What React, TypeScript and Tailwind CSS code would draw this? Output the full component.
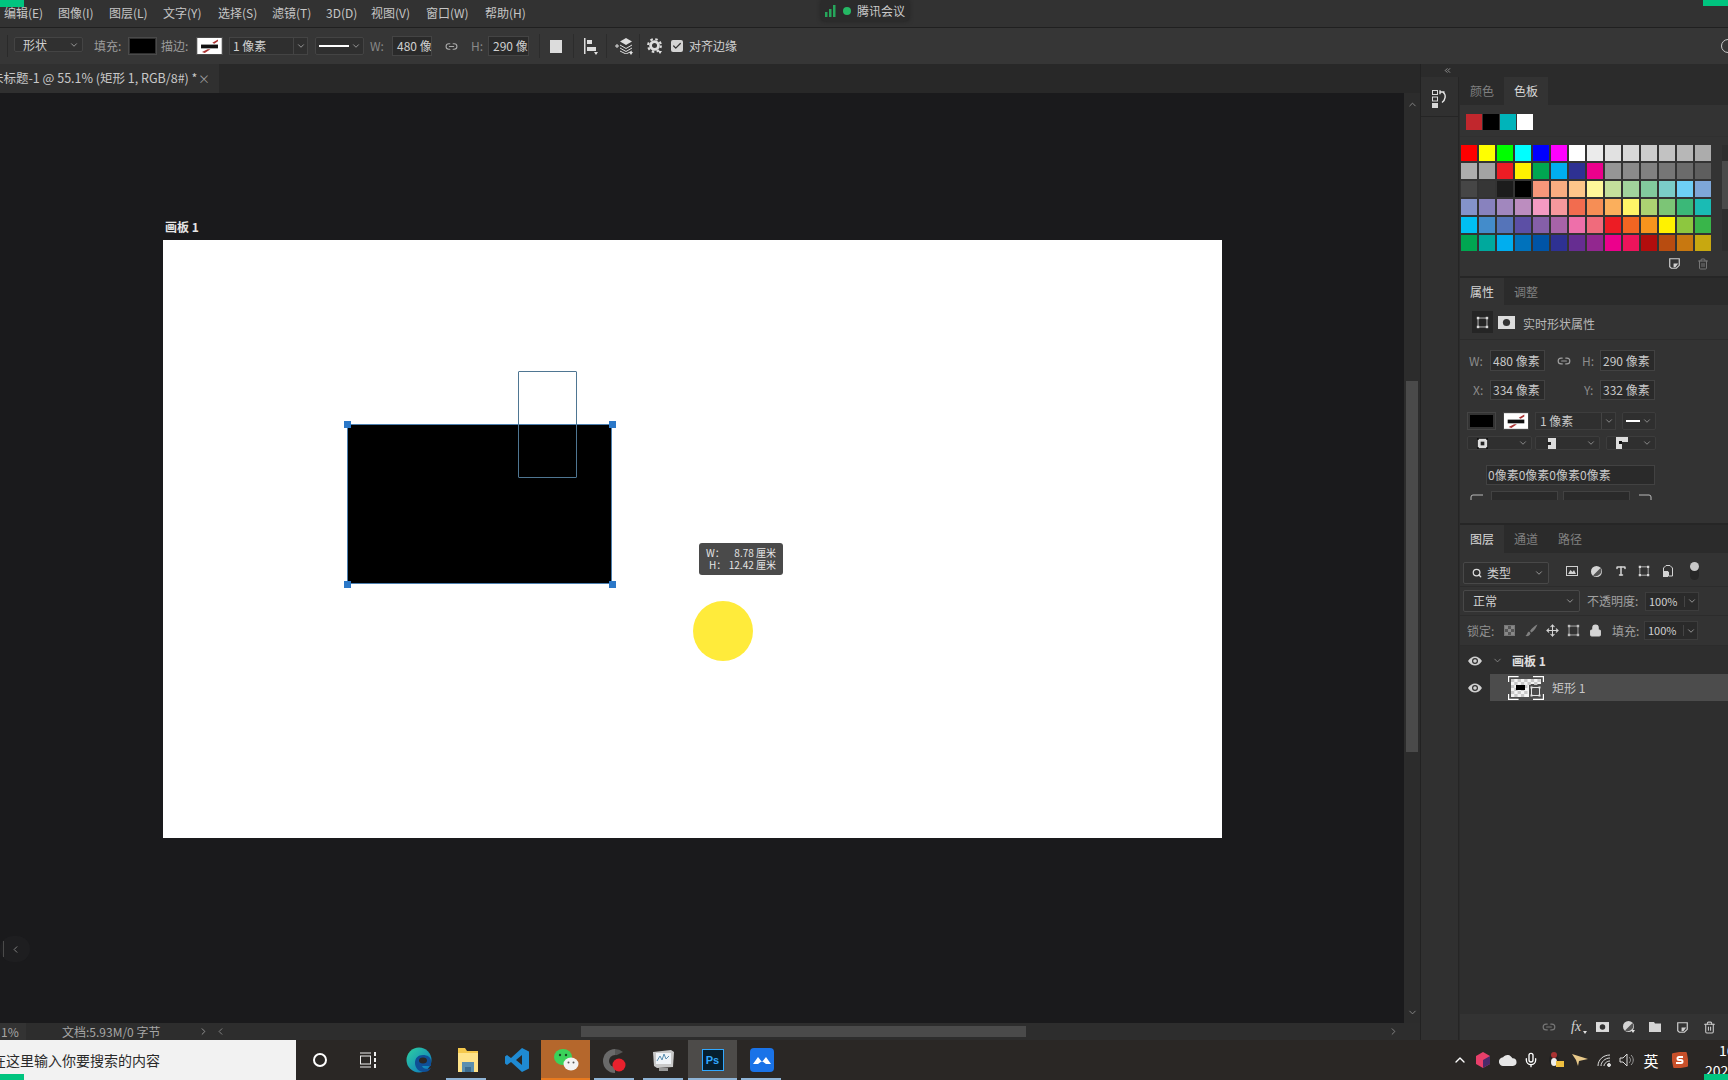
import React from "react";
import { ChevronDown, ChevronUp, ChevronLeft, ChevronRight, ChevronsLeft, Link2, Trash2, Check, Search, Lock, Move, Type, Mic } from "lucide-react";

const swatches = [
  ["#ff0000","#ffff00","#00ff00","#00ffff","#0000ff","#ff00ff","#ffffff","#ebebeb","#e1e1e1","#d7d7d7","#cccccc","#c2c2c2","#b7b7b7","#acacac"],
  ["#adadad","#a3a3a3","#ed1c24","#fff200","#00a651","#00aeef","#2e3192","#ec008c","#959595","#8b8b8b","#818181","#767676","#6b6b6b","#5e5e5e"],
  ["#464646","#363636","#1c1c1c","#000000","#f7977a","#f9ad81","#fdc68a","#fff79a","#c4df9b","#a2d39c","#82ca9d","#7bcdc8","#6ecff6","#7ea7d8"],
  ["#8493ca","#8882be","#a187be","#bc8dbf","#f49ac2","#f6989d","#f26c4f","#f68e55","#fbaf5c","#fff467","#acd372","#7cc576","#3bb878","#1abbb4"],
  ["#00bff3","#438ccb","#5574b9","#5c4fa5","#855fa8","#a763a8","#ee6faa","#f06b7c","#ed1c24","#f26522","#f7941d","#fff200","#8dc73f","#39b54a"],
  ["#00a651","#00a99d","#00aeef","#0072bc","#0054a6","#2e3192","#662d91","#92278f","#ec008c","#ed145b","#b20d0d","#b84c10","#c87810","#c8a810"],
];

const menus: [string, string][] = [
  ["编辑(E)", "w-[39px] ml-[4px]"], ["图像(I)", "w-[37px] ml-[15px]"], ["图层(L)", "w-[40px] ml-[14px]"], ["文字(Y)", "w-[40px] ml-[14px]"],
  ["选择(S)", "w-[39px] ml-[15px]"], ["滤镜(T)", "w-[39px] ml-[15px]"], ["3D(D)", "w-[30px] ml-[15px]"], ["视图(V)", "w-[41px] ml-[15px]"],
  ["窗口(W)", "w-[45px] ml-[14px]"], ["帮助(H)", "w-[42px] ml-[14px]"],
];

function Caret() {
  return <span className="absolute right-0 bottom-0 w-0 h-0 border-l-[2px] border-r-[2px] border-t-[3px] border-l-transparent border-r-transparent border-t-[#e0e0e0]" />;
}

function StrokeIcon({ className }: { className: string }) {
  return (
    <svg viewBox="0 0 26 17" className={className}>
      <rect width="26" height="17" fill="#fff" />
      <rect x="4" y="7" width="18" height="4" fill="#111" />
      <path d="M16 5l6-3.500v2L18 6zM5 15l6-3h3l-6 4z" fill="#a33" />
    </svg>
  );
}

function Tab({ label, active }: { label: string; active?: boolean }) {
  return (
    <div className={`w-[44px] h-full flex items-center justify-center text-[12px] ${active ? "bg-[#333333] text-[#d8d8d8]" : "bg-[#2b2b2b] text-[#808080]"}`}>
      {label}
    </div>
  );
}

function SmallDrop({ children, className }: { children: React.ReactNode; className: string }) {
  return (
    <div className={`flex items-center justify-between bg-[#2f2f2f] border border-[#3d3d3d] rounded-[2px] ${className}`}>
      {children}
      <ChevronDown size={10} className="text-[#9a9a9a] mr-[3px] shrink-0" />
    </div>
  );
}

function PropInput({ text }: { text: string }) {
  return (
    <div className="w-[55px] h-full bg-[#2a2a2a] border border-[#424242] flex items-center pl-[2px] text-[12px] text-[#c8c8c8] whitespace-nowrap overflow-hidden">{text}</div>
  );
}

function TransformIcon({ size = 16, color = "#d8d8d8" }: { size?: number; color?: string }) {
  return (
    <svg viewBox="0 0 16 16" width={size} height={size} fill="none">
      <rect x="2.500" y="2.500" width="11" height="11" stroke={color} />
      <g fill={color}>
        <rect x="1" y="1" width="3" height="3" /><rect x="12" y="1" width="3" height="3" />
        <rect x="1" y="12" width="3" height="3" /><rect x="12" y="12" width="3" height="3" />
      </g>
    </svg>
  );
}

function MaskIcon({ w = 17, h = 13 }: { w?: number; h?: number }) {
  return (
    <svg viewBox="0 0 17 13" width={w} height={h}>
      <rect width="17" height="13" fill="#dcdcdc" />
      <circle cx="8.500" cy="6.500" r="3.600" fill="#333" />
    </svg>
  );
}

function EyeIcon() {
  return (
    <svg viewBox="0 0 14 10" width="14" height="10">
      <path d="M0 5c2-3 4.400-4.500 7-4.500S12 2 14 5c-2 3-4.400 4.500-7 4.500S2 8 0 5z" fill="#d0d0d0" />
      <circle cx="7" cy="5" r="3" fill="#2e2e2e" />
      <circle cx="7" cy="5" r="1.800" fill="#d0d0d0" />
    </svg>
  );
}

function NewIcon() {
  return (
    <svg viewBox="0 0 12 12" width="11" height="11" fill="none">
      <path d="M.8.8h10.400v7.200l-3.200 3.200H2.500l-1.700-1.700z" stroke="#cfcfcf" strokeWidth="1.300" />
      <path d="M5 6h5l-3 4H5z" fill="#cfcfcf" />
    </svg>
  );
}

function HistoryIcon() {
  return (
    <svg viewBox="0 0 15 18" width="15" height="18" fill="none">
      <rect x="0.500" y="0.500" width="5" height="4" stroke="#d8d8d8" />
      <rect x="0.500" y="7" width="5" height="4" stroke="#d8d8d8" />
      <rect x="0" y="13" width="6" height="5" fill="#d8d8d8" />
      <path d="M8 2h4.500M8 .2v4M11 2c3.500 3 2.500 8-1 10.500" stroke="#e6e6e6" strokeWidth="1.400" />
    </svg>
  );
}

function GearIcon() {
  return (
    <svg viewBox="0 0 16 16" width="15" height="15" fill="none">
      <circle cx="8" cy="8" r="4.200" stroke="#dcdcdc" strokeWidth="3" />
      <circle cx="8" cy="8" r="6.800" stroke="#dcdcdc" strokeWidth="2.200" strokeDasharray="2.700 2.640" />
    </svg>
  );
}

function LayerThumb() {
  const cells: [number, number][] = [];
  for (let y = 0; y < 6; y++) for (let x = 0; x < 9; x++) if ((x + y) % 2 === 0) cells.push([x, y]);
  return (
    <svg viewBox="0 0 36 24" width="36" height="24" className="shrink-0">
      <rect x="3" y="3" width="18" height="18" fill="#f4f4f4" />
      <rect x="21" y="3" width="12" height="5" fill="#f4f4f4" />
      {cells.map(([x, y]) => (y < 2 || x < 5) && <rect key={`${x}-${y}`} x={3 + x * 3.300} y={3 + y * 3} width="3.300" height="3" fill="#c8c8c8" />)}
      <rect x="8" y="9" width="9" height="5" fill="#000" />
      <g fill="none" stroke="#fff" strokeWidth="1.200"><path d="M.6 6V.6h10M25 .6h10.400V6M.6 18v5.400h10M25 23.400h10.400V18" /></g>
      <rect x="23.500" y="11.500" width="8" height="8" fill="#4c4c4c" stroke="#e4e4e4" />
      <g fill="#e4e4e4"><rect x="22.500" y="10.500" width="2" height="2" /><rect x="30.500" y="10.500" width="2" height="2" /><rect x="22.500" y="18.500" width="2" height="2" /><rect x="30.500" y="18.500" width="2" height="2" /></g>
    </svg>
  );
}

function TaskCell({ children, active, under }: { children: React.ReactNode; active?: string; under?: string }) {
  return (
    <div className={`w-[49px] h-full relative flex items-center justify-center ${active ?? ""}`}>
      {children}
      {under && <span className={`absolute bottom-0 h-[2px] ${under}`} />}
    </div>
  );
}

export default function App() {
  return (
    <div className="w-[1728px] h-[1080px] flex flex-col overflow-hidden bg-[#333333] text-[12px] leading-none [font-family:'Noto_Sans_CJK_SC','Liberation_Sans',sans-serif]">
      {/* Menu bar */}
      <div className="h-[28px] shrink-0 bg-[#323232] border-b border-[#202020] flex items-center relative text-[#c6c6c6] text-[12px]">
        <span className="absolute left-0 top-0 w-[24px] h-[7px] bg-[#00c47f]" />
        <span className="absolute right-0 top-0 w-[25px] h-[6px] bg-[#00c47f]" />
        {menus.map(([label, cls]) => (
          <span key={label} className={`${cls} whitespace-nowrap pb-[1px]`}>{label}</span>
        ))}
        <div className="ml-[294px] self-start w-[88px] h-[21px] bg-[#2b2b2b] flex items-center rounded-b-[3px] shadow-[0_0_4px_#222]">
          <svg viewBox="0 0 11 12" width="11" height="12" className="ml-[4px]">
            <rect x="0" y="7" width="2.500" height="5" fill="#26a65b" /><rect x="4" y="4" width="2.500" height="8" fill="#26a65b" /><rect x="8" y="0" width="2.500" height="12" fill="#26a65b" />
          </svg>
          <span className="w-[8px] h-[8px] rounded-full bg-[#25b864] ml-[7px]" />
          <span className="ml-[6px] text-[12px] text-[#c9c9c9] whitespace-nowrap">腾讯会议</span>
        </div>
      </div>

      {/* Options bar */}
      <div className="h-[36px] shrink-0 bg-[#363636] flex items-center text-[#9c9c9c] text-[12px] relative overflow-hidden">
        <span className="ml-[7px] w-px h-[22px] bg-[#2a2a2a]" />
        <div className="ml-[6px] w-[69px] h-[15px] border border-[#444] rounded-[2px] flex items-center justify-between mb-[3px] bg-[#303030]">
          <span className="ml-[8px] text-[#d0d0d0]">形状</span>
          <ChevronDown size={10} className="mr-[3px] text-[#aaa]" />
        </div>
        <span className="ml-[11px] w-[30px] whitespace-nowrap">填充:</span>
        <div className="ml-[4px] w-[29px] h-[18px] border border-[#4a4a4a] p-[1px] bg-[#2f2f2f]"><div className="w-full h-full bg-black" /></div>
        <span className="ml-[4px] w-[31px] whitespace-nowrap">描边:</span>
        <div className="ml-[4px] w-[27px] h-[18px] border border-[#4a4a4a]"><StrokeIcon className="w-full h-full block" /></div>
        <div className="ml-[6px] w-[79px] h-[18px] bg-[#2f2f2f] border border-[#444] flex items-center justify-between text-[#d0d0d0]">
          <span className="ml-[3px]">1 像素</span>
          <span className="w-[14px] h-full border-l border-[#444] flex items-center justify-center"><ChevronDown size={10} className="text-[#aaa]" /></span>
        </div>
        <div className="ml-[7px] w-[49px] h-[18px] bg-[#2f2f2f] border border-[#444] rounded-[2px] flex items-center justify-between">
          <span className="ml-[3px] w-[30px] h-[2px] bg-white" />
          <ChevronDown size={10} className="mr-[2px] text-[#aaa]" />
        </div>
        <span className="ml-[6px] w-[16px] text-[#888]">W:</span>
        <div className="ml-[6px] w-[40px] h-[20px] bg-[#2a2a2a] border border-[#444] pl-[4px] text-[#cfcfcf] overflow-hidden whitespace-nowrap flex items-center">480 像素</div>
        <Link2 size={13} className="ml-[13px] text-[#aaa]" />
        <span className="ml-[13px] w-[13px] text-[#888]">H:</span>
        <div className="ml-[4px] w-[41px] h-[20px] bg-[#2a2a2a] border border-[#444] pl-[4px] text-[#cfcfcf] overflow-hidden whitespace-nowrap flex items-center">290 像素</div>
        <span className="ml-[10px] w-px h-[24px] bg-[#2c2c2c]" />
        <span className="ml-[10px] w-[12px] h-[13px] bg-[#dcdcdc] relative"><Caret /></span>
        <span className="ml-[11px] w-px h-[24px] bg-[#2c2c2c]" />
        <span className="ml-[10px] w-[14px] h-[17px] relative">
          <svg viewBox="0 0 14 16" width="14" height="16"><rect x="0" y="0" width="1.500" height="16" fill="#ddd" /><rect x="3" y="2" width="5" height="4" fill="#ddd" /><rect x="3" y="9" width="9" height="4" fill="#ddd" /></svg>
          <Caret />
        </span>
        <span className="ml-[8px] w-px h-[24px] bg-[#2c2c2c]" />
        <span className="ml-[7px] w-[19px] h-[17px] relative">
          <svg viewBox="0 0 19 16" width="19" height="16" fill="none"><path d="M1 8h4M3 6v4" stroke="#ddd" /><path d="M12 0l6 3.500-6 3.500-6-3.500z" fill="#ddd" /><path d="M6 7l6 3.500L18 7M6 10l6 3.500L18 10M6 13l6 3 6-3" stroke="#ddd" /></svg>
          <Caret />
        </span>
        <span className="ml-[6px] w-px h-[24px] bg-[#2c2c2c]" />
        <span className="ml-[7px] w-[15px] h-[16px] relative"><GearIcon /><Caret /></span>
        <span className="ml-[9px] w-[12px] h-[12px] rounded-[2px] bg-[#d4d4d4] flex items-center justify-center"><Check size={10} strokeWidth={3} className="text-[#333]" /></span>
        <span className="ml-[6px] text-[#cfcfcf] whitespace-nowrap">对齐边缘</span>
        <span className="absolute right-[-7px] top-[11px] w-[14px] h-[14px] rounded-full border border-[#c8c8c8]" />
      </div>

      {/* Workspace */}
      <div className="flex-1 min-h-0 flex">
        {/* Document column */}
        <div className="w-[1420px] shrink-0 flex flex-col bg-[#2a2a2a]">
          <div className="h-[29px] shrink-0 flex bg-[#282828]">
            <div className="w-[219px] bg-[#303030] flex items-center text-[#c8c8c8] overflow-hidden whitespace-nowrap">
              <span className="-ml-[9px] w-[202px] shrink-0 text-[12.500px]">未标题-1 @ 55.1% (矩形 1, RGB/8#) *</span>
              <span className="ml-[5px] text-[#9a9a9a]">×</span>
            </div>
          </div>
          <div className="flex-1 min-h-0 flex">
            <div className="flex-1 bg-[#1a1a1c] relative pl-[163px] pt-[121px]">
              <div className="h-[26px] text-[12px] font-bold text-[#e6e6e6] pl-[2px] flex items-center whitespace-nowrap">画板 1</div>
              <div className="w-[1059px] h-[598px] bg-white relative">
                <div className="absolute left-[184px] top-[184px] w-[265px] h-[160px] bg-black border-[1.500px] border-[#4d7fae]" />
                {[[181,181],[446,181],[181,341],[446,341]].map(([l,t]) => (
                  <span key={`${l}-${t}`} style={{ left: l, top: t }} className="absolute w-[7px] h-[7px] bg-[#2b78c8]" />
                ))}
                <div className="absolute left-[355px] top-[131px] w-[59px] h-[107px] border border-[#4f7692] rounded-[1px]" />
                <div className="absolute left-[536px] top-[303px] w-[84px] h-[32px] bg-[#4a4a4a] rounded-[3px] text-[10px] text-[#e4e4e4] flex flex-col justify-center items-end pr-[7px] leading-[12px] whitespace-nowrap">
                  <div className="flex w-full pl-[7px] justify-between"><span>W：</span><span>8.78 厘米</span></div>
                  <div className="flex w-full pl-[10px] justify-between"><span>H：</span><span>12.42 厘米</span></div>
                </div>
                <div className="absolute left-[530px] top-[361px] w-[60px] h-[60px] rounded-full bg-[#ffeb3b]" />
              </div>
              <div className="absolute left-0 top-[843px] w-[30px] h-[26px] flex items-center rounded-full bg-[#1e1e20]">
                <span className="w-px h-[16px] bg-[#4a4a4a] ml-[3px]" />
                <ChevronLeft size={11} className="ml-[6px] text-[#8a8a8a]" />
              </div>
            </div>
            {/* vertical scrollbar */}
            <div className="w-[16px] bg-[#2c2c2c] flex flex-col items-center">
              <ChevronUp size={11} className="text-[#8a8a8a] mt-[6px] shrink-0" />
              <div className="mt-[271px] w-[12px] h-[371px] bg-[#4a4a4a] shrink-0" />
              <div className="flex-1" />
              <ChevronDown size={11} className="text-[#8a8a8a] mb-[5px] shrink-0" />
            </div>
          </div>
          {/* status bar */}
          <div className="h-[17px] shrink-0 bg-[#2d2d2d] flex items-center text-[12px] text-[#a6a6a6]">
            <div className="w-[26px] h-full bg-[#333333] flex items-center pl-[1px]">1%</div>
            <div className="w-[172px] h-full pl-[36px] flex items-center whitespace-nowrap">文档:5.93M/0 字节</div>
            <ChevronRight size={11} className="text-[#999] shrink-0" />
            <ChevronLeft size={11} className="ml-[6px] text-[#888] shrink-0" />
            <div className="ml-[355px] w-[445px] h-[11px] bg-[#4a4a4a] shrink-0" />
            <div className="flex-1" />
            <ChevronRight size={11} className="mr-[21px] text-[#888] shrink-0" />
          </div>
        </div>

        {/* Right side */}
        <div className="flex-1 min-w-0 flex flex-col bg-[#2b2b2b] border-l border-[#222]">
          <div className="h-[13px] shrink-0 flex items-center pl-[22px]"><ChevronsLeft size={9} className="text-[#b0b0b0]" /></div>
          <div className="flex-1 min-h-0 flex">
            {/* icon strip */}
            <div className="w-[38px] shrink-0 bg-[#303030] border-r border-[#252525]">
              <div className="h-[40px] border-b border-[#252525] flex items-center justify-center pt-[4px]"><HistoryIcon /></div>
            </div>
            {/* Panels */}
            <div className="flex-1 min-w-0 flex flex-col ml-[1px] bg-[#262626]">
              {/* Swatches */}
              <div className="h-[199px] shrink-0 bg-[#333333] flex flex-col">
                <div className="h-[28px] flex bg-[#2b2b2b] shrink-0"><Tab label="颜色" /><Tab label="色板" active /></div>
                <div className="h-[32px] flex items-center pl-[6px] pt-[2px] gap-px border-b border-[#303030]">
                  {["#c1272d","#000000","#00b4ba","#ffffff"].map((c) => <span key={c} className="w-[16px] h-[16px]" style={{ background: c }} />)}
                </div>
                <div className="pt-[8px] pl-[1px] flex">
                  <div className="flex flex-col gap-[2px]">
                    {swatches.map((row, i) => (
                      <div key={i} className="flex gap-[2px]">
                        {row.map((c, j) => <span key={j} className="w-[16px] h-[16px]" style={{ background: c }} />)}
                      </div>
                    ))}
                  </div>
                  <div className="ml-[11px] w-[6px] h-[106px] bg-[#2e2e2e] flex flex-col"><div className="mt-[16px] h-[48px] bg-[#4a4a4a]" /></div>
                </div>
                <div className="flex-1 flex items-center justify-end pr-[19px] gap-[17px]">
                  <NewIcon /><Trash2 size={12} className="text-[#777]" />
                </div>
              </div>

              {/* Properties */}
              <div className="mt-[2px] h-[245px] shrink-0 bg-[#333333] flex flex-col overflow-hidden">
                <div className="h-[27px] flex bg-[#2b2b2b] shrink-0"><Tab label="属性" active /><Tab label="调整" /></div>
                <div className="h-[35px] shrink-0 flex items-center pl-[12px] border-b border-[#2c2c2c]">
                  <span className="w-[21px] h-[22px] bg-[#252525] flex items-center justify-center"><TransformIcon size={13} /></span>
                  <span className="ml-[5px] flex"><MaskIcon /></span>
                  <span className="ml-[8px] pt-[3px] text-[12px] text-[#b8b8b8]">实时形状属性</span>
                </div>
                <div className="mt-[10px] h-[21px] shrink-0 flex items-center pl-[9px] text-[#8c8c8c]">
                  <span className="w-[21px]">W:</span><PropInput text="480 像素" />
                  <span className="w-[37px] flex justify-center"><Link2 size={14} className="text-[#a0a0a0]" /></span>
                  <span className="w-[18px]">H:</span><PropInput text="290 像素" />
                </div>
                <div className="mt-[9px] h-[20px] shrink-0 flex items-center pl-[13px] text-[#8c8c8c]">
                  <span className="w-[17px]">X:</span><PropInput text="334 像素" />
                  <span className="w-[39px]" />
                  <span className="w-[16px]">Y:</span><PropInput text="332 像素" />
                </div>
                <div className="mt-[12px] h-[18px] shrink-0 flex items-center pl-[7px]">
                  <div className="w-[29px] h-full border border-[#444] p-[2px]"><div className="w-full h-full bg-black" /></div>
                  <div className="ml-[7px] w-[26px] h-full border border-[#444]"><StrokeIcon className="w-full h-full block" /></div>
                  <div className="ml-[6px] w-[81px] h-full bg-[#2f2f2f] border border-[#3d3d3d] flex items-center justify-between text-[#c8c8c8]">
                    <span className="ml-[4px]">1 像素</span>
                    <span className="w-[14px] h-full border-l border-[#444] flex items-center justify-center"><ChevronDown size={10} className="text-[#9a9a9a]" /></span>
                  </div>
                  <SmallDrop className="ml-[6px] w-[34px] h-full"><span className="ml-[3px] w-[14px] h-[2px] bg-white" /></SmallDrop>
                </div>
                <div className="mt-[6px] h-[14px] shrink-0 flex items-center pl-[7px]">
                  <SmallDrop className="w-[65px] h-full"><span className="ml-[9px] flex"><svg viewBox="0 0 12 12" width="11" height="11"><rect x="1" y="1" width="10" height="10" fill="#ddd" /><rect x="4" y="4" width="4" height="4" fill="#222" /><g fill="#111"><rect width="2" height="2" /><rect x="10" width="2" height="2" /><rect y="10" width="2" height="2" /><rect x="10" y="10" width="2" height="2" /></g></svg></span></SmallDrop>
                  <SmallDrop className="ml-[3px] w-[65px] h-full"><span className="ml-[11px] flex"><svg viewBox="0 0 9 11" width="9" height="11"><rect x="1" width="8" height="11" fill="#ddd" /><rect y="4" width="4" height="3" fill="#222" /></svg></span></SmallDrop>
                  <SmallDrop className="ml-[6px] w-[50px] h-full"><span className="ml-[9px] flex"><svg viewBox="0 0 12 12" width="12" height="12"><path d="M0 0h12v5H6v7H0z" fill="#ddd" /><rect x="3" y="4" width="3" height="3" fill="#111" /></svg></span></SmallDrop>
                </div>
                <div className="mt-[15px] ml-[26px] w-[169px] h-[20px] shrink-0 bg-[#2a2a2a] border border-[#424242] flex items-center pl-[1px] text-[#c8c8c8]">0像素0像素0像素0像素</div>
                <div className="mt-[6px] h-[9px] shrink-0 flex pl-[10px] overflow-hidden">
                  <svg viewBox="0 0 14 8" width="14" height="8" className="mt-[3px]" fill="none"><path d="M1 8V3q0-2 2-2h10" stroke="#bbb" /></svg>
                  <div className="ml-[7px] w-[67px] h-[14px] bg-[#2a2a2a] border border-[#424242]" />
                  <div className="ml-[5px] w-[67px] h-[14px] bg-[#2a2a2a] border border-[#424242]" />
                  <svg viewBox="0 0 14 8" width="14" height="8" className="ml-[8px] mt-[3px]" fill="none"><path d="M13 8V3q0-2-2-2H1" stroke="#bbb" /></svg>
                </div>
              </div>

              {/* Layers */}
              <div className="mt-[2px] flex-1 min-h-0 bg-[#333333] flex flex-col">
                <div className="h-[28px] flex bg-[#2b2b2b] shrink-0"><Tab label="图层" active /><Tab label="通道" /><Tab label="路径" /></div>
                <div className="h-[34px] shrink-0 flex items-start pt-[9px] pl-[3px] border-b border-[#2c2c2c]">
                  <div className="w-[86px] h-[22px] bg-[#2f2f2f] border border-[#484848] rounded-[2px] flex items-center justify-between text-[#d0d0d0]">
                    <span className="flex items-center ml-[8px] gap-[5px]"><Search size={10} strokeWidth={3} className="text-[#ddd]" />类型</span>
                    <ChevronDown size={10} className="mr-[4px] text-[#aaa]" />
                  </div>
                  <div className="flex items-center h-[18px]">
                    <span className="ml-[17px] flex"><svg viewBox="0 0 12 10" width="12" height="10" fill="none"><rect x=".5" y=".5" width="11" height="9" stroke="#d0d0d0" /><path d="M2 8l2.500-4 2 2 1.500-2 2 4z" fill="#d0d0d0" /></svg></span>
                    <span className="ml-[13px] flex"><svg viewBox="0 0 11 11" width="11" height="11"><circle cx="5.500" cy="5.500" r="5.500" fill="#d4d4d4" /><path d="M9.500 2L2 9.500A5.500 5.500 0 0 0 9.500 2z" fill="#555" /></svg></span>
                    <Type size={12} strokeWidth={3} className="ml-[13px] text-[#d4d4d4]" />
                    <span className="ml-[11px] flex"><TransformIcon size={12} /></span>
                    <span className="ml-[13px] flex"><svg viewBox="0 0 10 12" width="10" height="12"><path d="M3 .5h4l2.500 2.500v8h-4V7H.5V3z" fill="none" stroke="#d4d4d4" /><rect x="0" y="6" width="5" height="6" fill="#d4d4d4" /></svg></span>
                    <span className="ml-[17px] w-[9px] h-[18px] rounded-full bg-[#272727] relative"><span className="absolute top-0 left-0 w-[9px] h-[9px] rounded-full bg-[#c8c8c8]" /></span>
                  </div>
                </div>
                <div className="h-[29px] shrink-0 flex items-center pl-[3px] border-b border-[#2c2c2c]">
                  <div className="w-[117px] h-[22px] bg-[#2f2f2f] border border-[#484848] rounded-[2px] flex items-center justify-between text-[#d0d0d0]">
                    <span className="ml-[9px]">正常</span>
                    <ChevronDown size={10} className="mr-[4px] text-[#aaa]" />
                  </div>
                  <span className="ml-[7px] w-[58px] text-[#a0a0a0] whitespace-nowrap">不透明度:</span>
                  <div className="w-[54px] h-[19px] bg-[#2a2a2a] border border-[#3d3d3d] flex items-center text-[#cfcfcf] text-[11px]">
                    <span className="w-[39px] pl-[3px] border-r border-[#444]">100%</span>
                    <span className="flex-1 flex justify-center"><ChevronDown size={10} className="text-[#aaa]" /></span>
                  </div>
                </div>
                <div className="h-[30px] shrink-0 flex items-center pl-[7px] border-b border-[#2c2c2c]">
                  <span className="w-[30px] text-[#909090] whitespace-nowrap">锁定:</span>
                  <span className="ml-[7px] w-[11px] h-[11px] grid grid-cols-3 grid-rows-3 bg-[#555] border border-[#777]">
                    <i className="bg-[#888]" /><i /><i className="bg-[#888]" /><i /><i className="bg-[#888]" /><i /><i className="bg-[#888]" /><i /><i className="bg-[#888]" />
                  </span>
                  <svg viewBox="0 0 13 13" width="13" height="13" className="ml-[10px]"><path d="M12.500.5C10 1.500 6.500 4.500 5 7l1.500 1.500C9 7 11.500 3 12.500.5zM4 7.500c-2 .5-1.500 3-3.500 4.500 2.500.5 5-.5 5-3z" fill="#808080" /></svg>
                  <Move size={13} className="ml-[8px] text-[#d4d4d4]" />
                  <span className="ml-[8px] flex"><TransformIcon size={13} color="#c0c0c0" /></span>
                  <Lock size={13} fill="#d4d4d4" className="ml-[9px] text-[#d4d4d4]" />
                  <span className="ml-[10px] w-[32px] text-[#a0a0a0] whitespace-nowrap">填充:</span>
                  <div className="w-[54px] h-[19px] bg-[#2a2a2a] border border-[#3d3d3d] flex items-center text-[#cfcfcf] text-[11px]">
                    <span className="w-[39px] pl-[3px] border-r border-[#444]">100%</span>
                    <span className="flex-1 flex justify-center"><ChevronDown size={10} className="text-[#aaa]" /></span>
                  </div>
                </div>
                <div className="flex-1 min-h-0 bg-[#2e2e2e] flex flex-col">
                  <div className="h-[28px] shrink-0 flex items-center pl-[8px] pt-[1px]">
                    <EyeIcon />
                    <ChevronDown size={11} className="ml-[10px] text-[#888]" />
                    <span className="ml-[9px] text-[12px] font-bold text-[#e0e0e0]">画板 1</span>
                  </div>
                  <div className="h-[27px] shrink-0 flex items-center pl-[8px]">
                    <EyeIcon />
                    <div className="ml-[8px] flex-1 h-full bg-[#4c4c4c] flex items-center pl-[18px]">
                      <LayerThumb />
                      <span className="ml-[8px] text-[#c8c8c8] whitespace-nowrap">矩形 1</span>
                    </div>
                  </div>
                </div>
                <div className="h-[26px] shrink-0 bg-[#333333] flex items-center text-[#cfcfcf] relative">
                  <Link2 size={14} className="ml-[82px] text-[#777]" />
                  <span className="ml-[15px] w-[16px] italic text-[14px] [font-family:'Liberation_Serif',serif] text-[#d4d4d4] relative">fx<Caret /></span>
                  <span className="ml-[9px] flex"><MaskIcon w={13} h={10} /></span>
                  <span className="ml-[14px] w-[12px] h-[12px] relative flex"><svg viewBox="0 0 11 11" width="11" height="11"><circle cx="5.500" cy="5.500" r="5.500" fill="#d4d4d4" /><path d="M9.500 2L2 9.500A5.500 5.500 0 0 0 9.500 2z" fill="#555" /></svg><Caret /></span>
                  <span className="ml-[14px] flex"><svg viewBox="0 0 12 10" width="12" height="10"><path d="M0 0h5l1 1.500h6V10H0z" fill="#d4d4d4" /></svg></span>
                  <span className="ml-[16px] flex"><NewIcon /></span>
                  <Trash2 size={13} className="ml-[15px] text-[#c8c8c8]" />
                </div>
              </div>
            </div>
          </div>
        </div>
      </div>

      {/* Taskbar */}
      <div className="h-[40px] shrink-0 bg-[#2a2725] flex items-center relative">
        <span className="absolute left-[0] bottom-0 w-[24px] h-[6px] bg-[#00c47f] z-10" />
        <span className="absolute right-0 bottom-0 w-[24px] h-[6px] bg-[#00c47f] z-10" />
        <div className="w-[296px] h-full bg-[#f2f2f2] flex items-center text-[14px] text-[#2a2a2a] overflow-hidden whitespace-nowrap">
          <span className="-ml-[8px]">在这里输入你要搜索的内容</span>
        </div>
        <span className="ml-[17px] w-[14px] h-[14px] rounded-full border-2 border-white" />
        <svg viewBox="0 0 17 16" width="17" height="16" className="ml-[33px]" fill="none">
          <rect x=".5" y="4" width="10" height="8" stroke="#eee" /><path d="M0 1h11M0 15h11" stroke="#eee" /><path d="M14 0h2v4h-2zM14 6h2v4h-2zM14 12h2v4h-2z" fill="#eee" />
        </svg>
        <div className="ml-[17px] h-full flex">
          <TaskCell>
            <svg viewBox="0 0 26 26" width="26" height="26">
              <defs><linearGradient id="edge" x1="0" y1="0" x2="1" y2="1"><stop offset="0" stopColor="#2ed3a0" /><stop offset="1" stopColor="#0b6fc2" /></linearGradient></defs>
              <circle cx="13" cy="13" r="12.500" fill="url(#edge)" />
              <path d="M25 14c0-4-4-6-8-6-5 0-8 3-8 8 0 5 4 9 9 9 3 0 5-1 7-4-3 2-8 1-9-2h9c0-2 0-4 0-5z" fill="#0f4f96" />
              <ellipse cx="17" cy="13.500" rx="4" ry="3" fill="#2a2725" />
            </svg>
          </TaskCell>
          <TaskCell under="left-[3px] w-[40px] bg-[#8fb4d6]">
            <svg viewBox="0 0 22 26" width="22" height="26">
              <path d="M1 1h7l2 3h11v21H1z" fill="#f5c84c" /><rect x="1" y="6" width="20" height="19" fill="#ffe38a" /><rect x="5" y="15" width="12" height="10" fill="#5a8fb0" /><rect x="8" y="20" width="6" height="5" fill="#3c6d90" />
            </svg>
          </TaskCell>
          <TaskCell>
            <svg viewBox="0 0 26 26" width="26" height="26">
              <path d="M18 1l7 3.500v17L18 25 7 15l-4 3-2-1.500v-7L3 8l4 3zM18 8l-6 5 6 5z" fill="#1f8ad2" fillRule="evenodd" />
            </svg>
          </TaskCell>
          <TaskCell active="bg-[#b5672c]" under="left-0 w-full bg-[#e87a1f]">
            <svg viewBox="0 0 26 26" width="26" height="26">
              <ellipse cx="10" cy="10" rx="9" ry="8" fill="#3bd25a" />
              <circle cx="7" cy="8" r="1.200" fill="#1a4a25" /><circle cx="13" cy="8" r="1.200" fill="#1a4a25" />
              <ellipse cx="18" cy="17" rx="7.500" ry="6.500" fill="#f2f2f2" />
              <circle cx="15.500" cy="15.500" r="1" fill="#555" /><circle cx="20.500" cy="15.500" r="1" fill="#555" />
            </svg>
          </TaskCell>
          <TaskCell under="left-[4px] w-[40px] bg-[#8fb4d6]">
            <svg viewBox="0 0 26 26" width="26" height="26" className="mt-[2px]">
              <path d="M13 1a12 12 0 1 0 0 24z" fill="#6a6a6a" /><path d="M13 1a12 12 0 0 1 8 3l-8 4z" fill="#555" />
              <circle cx="13" cy="13" r="6" fill="#2a2725" /><circle cx="17" cy="17" r="6.500" fill="#e8212d" />
            </svg>
          </TaskCell>
          <TaskCell under="left-[4px] w-[40px] bg-[#8fb4d6]">
            <svg viewBox="0 0 26 26" width="26" height="26">
              <path d="M2 5l18-2 3 2-1 15-16 1-3-2z" fill="#c9c9c9" /><rect x="5" y="6" width="15" height="11" fill="#f0f4f8" /><path d="M6 14l3-5 2 4 2-6 2 5 3-3" stroke="#5a8fb0" fill="none" /><rect x="8" y="21" width="9" height="3" fill="#999" />
            </svg>
          </TaskCell>
          <TaskCell active="bg-[#4d4b49]" under="left-0 w-full bg-[#8fb4d6]">
            <div className="w-[22px] h-[22px] bg-[#061e2e] border-[1.500px] border-[#31a8ff] flex items-center justify-center text-[11px] text-[#31a8ff] font-semibold [font-family:'Liberation_Sans',sans-serif]">Ps</div>
          </TaskCell>
          <TaskCell under="left-[4px] w-[40px] bg-[#8fb4d6]">
            <svg viewBox="0 0 24 24" width="24" height="24">
              <rect width="24" height="24" rx="4" fill="#1a73e8" /><path d="M3 16l5-7 4 5 4-5 5 7h-5l-4-3-4 3z" fill="#fff" />
            </svg>
          </TaskCell>
        </div>
        <div className="flex-1" />
        <div className="h-full flex items-center relative w-[282px] overflow-hidden">
          <ChevronUp size={16} className="absolute left-[6px] text-white" />
          <svg viewBox="0 0 14 16" width="14" height="16" className="absolute left-[30px]"><path d="M7 0l7 4v8l-7 4-7-4V4z" fill="#e83f6a" /><path d="M7 8l7-4v8l-7 4z" fill="#4a2a6a" /></svg>
          <svg viewBox="0 0 16 10" width="18" height="11" className="absolute left-[53px]"><path d="M4 10a4 4 0 0 1-.5-8A5 5 0 0 1 12 3a3.500 3.500 0 0 1 .5 7z" fill="#e6e6e6" /></svg>
          <Mic size={16} className="absolute left-[77px] text-white" />
          <svg viewBox="0 0 16 16" width="16" height="16" className="absolute left-[102px]"><ellipse cx="6" cy="8" rx="5" ry="6" fill="#222" /><circle cx="6" cy="3" r="3" fill="#a33" /><ellipse cx="6" cy="10" rx="3" ry="4" fill="#eee" /><rect x="8" y="9" width="8" height="6" fill="#f0c040" /></svg>
          <svg viewBox="0 0 16 14" width="16" height="14" className="absolute left-[126px]"><path d="M0 1l16 5-9 2-1 5-2-6z" fill="#e8c98a" /></svg>
          <svg viewBox="0 0 16 14" width="16" height="14" className="absolute left-[151px]" fill="none" stroke="#ddd"><path d="M1 13C1 7 6 2 13 2M4 13c0-4 4-8 9-8M7 13c0-2.500 3-5 6-5" /><circle cx="12" cy="12" r="1.500" fill="#ddd" /></svg>
          <svg viewBox="0 0 16 14" width="16" height="14" className="absolute left-[173px]" fill="none" stroke="#ddd"><path d="M1 5h3l4-4v12l-4-4H1z" /><path d="M10 4c2 2 2 4 0 6M12 2c3 3 3 7 0 10" stroke="#999" /></svg>
          <span className="absolute left-[197px] w-[16px] text-[15px] text-white text-center">英</span>
          <svg viewBox="0 0 16 16" width="16" height="16" className="absolute left-[226px]"><rect width="16" height="16" rx="3" fill="#c8502a" transform="rotate(-10 8 8)" /><path d="M11 5H7a1.500 1.500 0 0 0 0 3h2a1.500 1.500 0 0 1 0 3H4" stroke="#fff" strokeWidth="2" fill="none" /></svg>
          <div className="absolute left-[259px] w-[60px] flex flex-col gap-[6px] text-[14px] text-white whitespace-nowrap">
            <span className="pl-[14px]">16:24</span>
            <span>2021/3/8</span>
          </div>
        </div>
      </div>
    </div>
  );
}
